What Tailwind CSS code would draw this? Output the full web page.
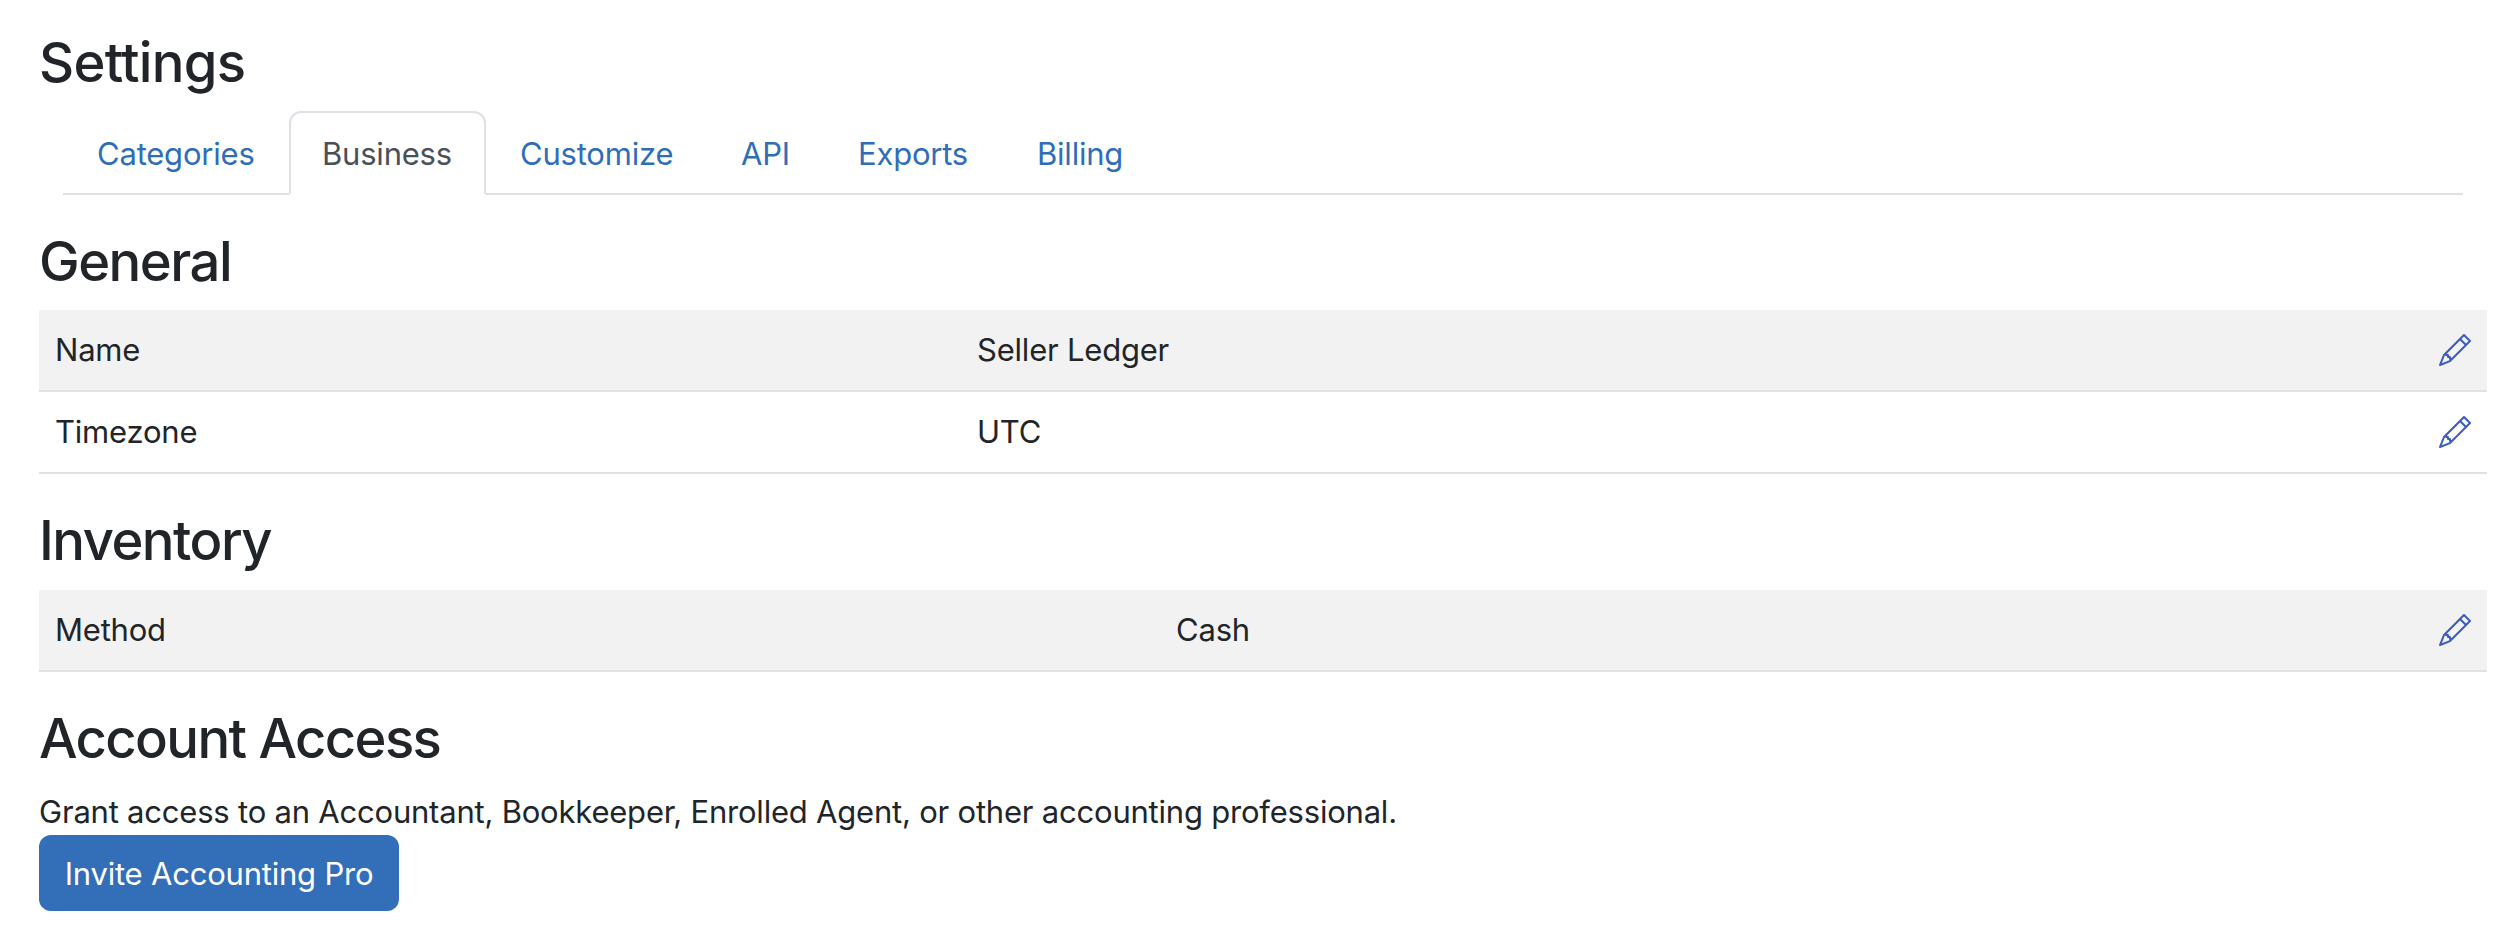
<!DOCTYPE html>
<html lang="en">
<head>
    <meta charset="UTF-8">
    <meta name="viewport" content="width=device-width, initial-scale=1.0">
    <title>Settings</title>
    <script src="https://cdn.jsdelivr.net/npm/@tailwindcss/browser@4"></script>
</head>
<body class="bg-white text-[#212529] font-['Inter',sans-serif] text-[31px] leading-[48px] tracking-[-0.21px]">

    <!-- Shared icons -->
    <svg class="hidden">
        <symbol id="pencil" viewBox="0 0 16 16">
            <path d="M12.146.146a.5.5 0 0 1 .708 0l3 3a.5.5 0 0 1 0 .708l-10 10a.5.5 0 0 1-.168.11l-5 2a.5.5 0 0 1-.65-.65l2-5a.5.5 0 0 1 .11-.168zM11.207 2.5 13.5 4.793 14.793 3.5 12.5 1.207zm1.586 3L10.5 3.207 4 9.707V10h.5a.5.5 0 0 1 .5.5v.5h.5a.5.5 0 0 1 .5.5v.5h.293zm-9.761 5.175-.106.106-1.528 3.821 3.821-1.528.106-.106A.5.5 0 0 1 5 12.5V12h-.5a.5.5 0 0 1-.5-.5V11h-.5a.5.5 0 0 1-.468-.325"/>
        </symbol>
    </svg>

    <main class="pt-7 pl-[39px] pr-[33px]">
        <h2 class="mb-[15px] text-[54.4px] leading-[68.2px] font-medium tracking-[-0.7px]">Settings</h2>

        <!-- Tabs -->
        <nav class="mx-6 mb-8 flex border-b-2 border-[#dee2e6] text-[#306db8]">
            <a href="#" class="-mb-0.5 w-[226px] pl-8 pt-[17px] pb-[15px] border-2 border-transparent">Categories</a>
            <a href="#" class="-mb-0.5 w-[197px] pl-[31px] pt-[17px] pb-[15px] border-2 border-[#dee2e6] border-b-white rounded-t-xl bg-white text-[#495057]">Business</a>
            <a href="#" class="-mb-0.5 w-[221px] pl-8 pt-[17px] pb-[15px] border-2 border-transparent">Customize</a>
            <a href="#" class="-mb-0.5 w-[117px] pl-8 pt-[17px] pb-[15px] border-2 border-transparent">API</a>
            <a href="#" class="-mb-0.5 w-[179px] pl-8 pt-[17px] pb-[15px] border-2 border-transparent">Exports</a>
            <a href="#" class="-mb-0.5 px-8 pt-[17px] pb-[15px] border-2 border-transparent">Billing</a>
        </nav>

        <!-- General -->
        <h2 class="mb-[15px] text-[54.4px] leading-[68.2px] font-medium tracking-[-1.5px]">General</h2>
        <div class="mb-8">
            <div class="flex items-center p-4 border-b-2 border-[#dee2e6] bg-[#f2f2f2]">
                <div class="w-[922px]">Name</div>
                <div class="flex-1">Seller Ledger</div>
                <a href="#" class="text-[#3b5bc0]"><svg class="size-8" fill="currentColor"><use href="#pencil"/></svg></a>
            </div>
            <div class="flex items-center p-4 border-b-2 border-[#dee2e6]">
                <div class="w-[922px]">Timezone</div>
                <div class="flex-1">UTC</div>
                <a href="#" class="text-[#3b5bc0]"><svg class="size-8" fill="currentColor"><use href="#pencil"/></svg></a>
            </div>
        </div>

        <!-- Inventory -->
        <h2 class="mb-[15px] text-[54.4px] leading-[68.2px] font-medium tracking-[-1.5px]">Inventory</h2>
        <div class="mb-8">
            <div class="flex items-center p-4 border-b-2 border-[#dee2e6] bg-[#f2f2f2]">
                <div class="w-[1121px]">Method</div>
                <div class="flex-1">Cash</div>
                <a href="#" class="text-[#3b5bc0]"><svg class="size-8" fill="currentColor"><use href="#pencil"/></svg></a>
            </div>
        </div>

        <!-- Account access -->
        <h2 class="mb-[15px] text-[54.4px] leading-[68.2px] font-medium tracking-[-1.6px]">Account Access</h2>
        <p class="h-12 pt-px">Grant access to an Accountant, Bookkeeper, Enrolled Agent, or other accounting professional.</p>
        <button class="block w-[360px] h-[76px] pt-0.5 rounded-xl bg-[#336eb8] text-white">Invite Accounting Pro</button>
    </main>

</body>
</html>
